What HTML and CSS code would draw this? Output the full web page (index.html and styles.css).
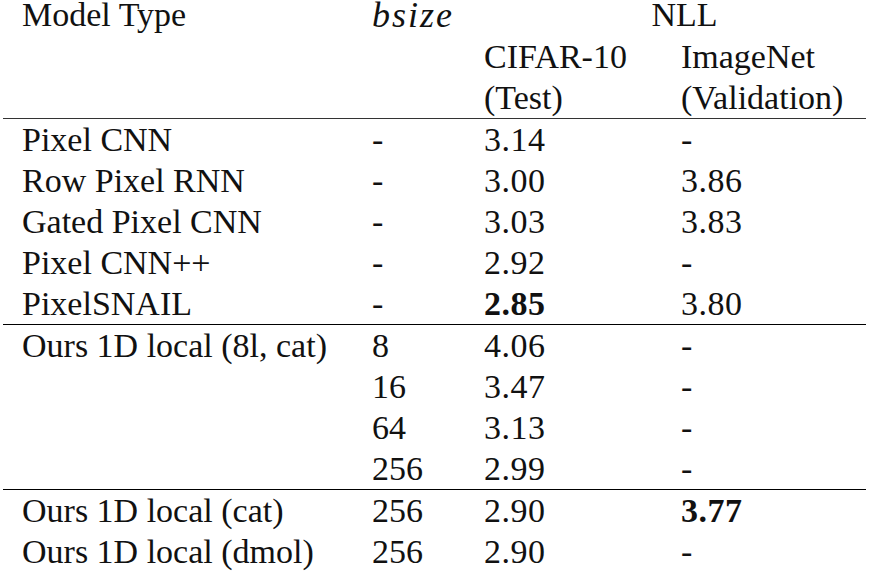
FILE: index.html
```html
<!DOCTYPE html>
<html lang="en">
<head>
  <meta charset="UTF-8" />
  <title>NLL results</title>
  <link rel="stylesheet" href="styles.css">
</head>
<body>
  <table class="results">
    <colgroup>
      <col class="c-model">
      <col class="c-bsize">
      <col class="c-cifar">
      <col class="c-imagenet">
    </colgroup>
    <thead>
      <tr class="first">
        <th>Model Type</th>
        <th><span class="math">bsize</span></th>
        <th colspan="2" class="center">NLL</th>
      </tr>
      <tr>
        <th></th>
        <th></th>
        <th>CIFAR-10</th>
        <th>ImageNet</th>
      </tr>
      <tr>
        <th></th>
        <th></th>
        <th>(Test)</th>
        <th>(Validation)</th>
      </tr>
    </thead>
    <tbody>
      <tr><td>Pixel CNN</td><td>-</td><td class="num">3.14</td><td>-</td></tr>
      <tr><td>Row Pixel RNN</td><td>-</td><td class="num">3.00</td><td class="num">3.86</td></tr>
      <tr><td>Gated Pixel CNN</td><td>-</td><td class="num">3.03</td><td class="num">3.83</td></tr>
      <tr><td>Pixel CNN++</td><td>-</td><td class="num">2.92</td><td>-</td></tr>
      <tr><td>PixelSNAIL</td><td>-</td><td class="num best">2.85</td><td class="num">3.80</td></tr>
    </tbody>
    <tbody>
      <tr><td>Ours 1D local (8l, cat)</td><td>8</td><td class="num">4.06</td><td>-</td></tr>
      <tr><td></td><td>16</td><td class="num">3.47</td><td>-</td></tr>
      <tr><td></td><td>64</td><td class="num">3.13</td><td>-</td></tr>
      <tr><td></td><td>256</td><td class="num">2.99</td><td>-</td></tr>
    </tbody>
    <tbody>
      <tr><td>Ours 1D local (cat)</td><td>256</td><td class="num">2.90</td><td class="num best">3.77</td></tr>
      <tr><td>Ours 1D local (dmol)</td><td>256</td><td class="num">2.90</td><td>-</td></tr>
    </tbody>
  </table>
</body>
</html>
```

FILE: styles.css
```css
* { box-sizing: border-box; margin: 0; padding: 0; }
body {
  background: #fff;
  color: #111;
  font-family: "Liberation Serif", Tinos, "Times New Roman", serif;
  font-size: 34px;
  overflow: hidden;
}

.results {
  border-collapse: collapse;
  margin-left: 3px;
  width: 863px;
  table-layout: fixed;
}
.c-model { width: 350px; }
.c-bsize { width: 112px; }
.c-cifar { width: 197px; }
.c-imagenet { width: 204px; }

.results th,
.results td {
  font-weight: normal;
  text-align: left;
  vertical-align: top;
  padding: 0 0 0 19px;
  height: 41px;
  line-height: 41px;
  white-space: nowrap;
}
.results .first th { height: 35.5px; line-height: 30.5px; }
.results th.center { text-align: center; padding-left: 38px; }

.results thead { border-bottom: 1px solid #333; }
.results tbody + tbody { border-top: 1px solid #000; }

.math { font-style: italic; font-size: 36px; letter-spacing: 2px; }
.num { letter-spacing: 0.5px; }
.results .best { font-weight: bold; }
```
